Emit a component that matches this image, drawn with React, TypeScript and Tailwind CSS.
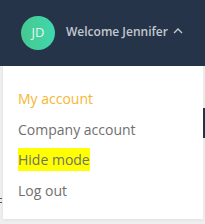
import React from "react";

export default function App() {
  return (
    <div
      className="relative w-[205px] h-[224px] overflow-hidden bg-[#eeeeee]"
      style={{ fontFamily: '"Open Sans", sans-serif' }}
    >
      <div className="h-[66px] bg-[#263449] flex items-center pl-[21px]">
        <div className="w-[34px] h-[34px] rounded-full bg-gradient-to-r from-[#45c98f] to-[#40d7ae] flex items-center justify-center text-[13px] text-[#e6f7ef] mt-[-1px]">
          JD
        </div>
        <div className="ml-[11px] flex items-center text-[12px] font-semibold text-[#c3c8d0] mt-[-2px]">
          <span>Welcome Jennifer</span>
          <svg width="10" height="6" viewBox="0 0 10 6" className="ml-[5px] mt-[-2px]">
            <path d="M1 5 L5 1 L9 5" fill="none" stroke="#c3c8d0" strokeWidth="1.4" />
          </svg>
        </div>
      </div>
      <div className="absolute right-0 top-[108px] w-[2px] h-[30px] bg-[#263449]" />
      <div className="absolute left-0 top-[198px] w-[2px] h-[5px] border-y border-[#555]" />
      <div className="absolute left-[3px] top-[66px] w-[200px] h-[153px] bg-white shadow-[0_1px_3px_rgba(0,0,0,0.06)] pl-[15px] pt-[21px] flex flex-col text-[14px] leading-[23px]">
        <div className="h-[31px] text-[#f6b634]">My account</div>
        <div className="h-[31px] text-[#707070]">Company account</div>
        <div className="h-[31px] mt-[-1px]">
          <span className="bg-[#ffff00] text-[#707070] inline-block">Hide mode</span>
        </div>
        <div className="h-[31px] text-[#707070]">Log out</div>
      </div>
    </div>
  );
}
